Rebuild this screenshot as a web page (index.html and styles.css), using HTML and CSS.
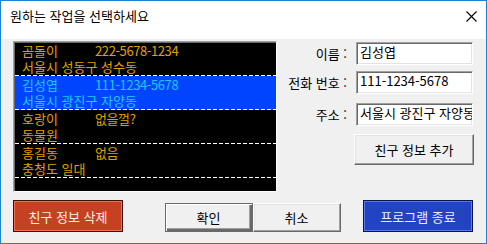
FILE: index.html
```html
<!DOCTYPE html>
<html lang="ko">
<head>
<meta charset="utf-8">
<link rel="stylesheet" href="styles.css">
</head>
<body>
<div class="window">
  <div class="titlebar">
    <span class="title">원하는 작업을 선택하세요</span>
    <svg class="close" width="11" height="11" viewBox="0 0 11 11"><path d="M0.5 0.5 L10.5 10.5 M10.5 0.5 L0.5 10.5" stroke="#000" stroke-width="1.1" fill="none"/></svg>
  </div>
  <div class="content">
    <div class="main">
      <div class="listbox">
        <div class="row">
          <div class="line"><span class="name">곰돌이</span><span class="phone">222-5678-1234</span></div>
          <div class="line">서울시 성동구 성수동</div>
        </div>
        <div class="row selected">
          <div class="line"><span class="name">김성엽</span><span class="phone">111-1234-5678</span></div>
          <div class="line">서울시 광진구 자양동</div>
        </div>
        <div class="row">
          <div class="line"><span class="name">호랑이</span><span class="phone">없을껄?</span></div>
          <div class="line">동물원</div>
        </div>
        <div class="row">
          <div class="line"><span class="name">홍길동</span><span class="phone">없음</span></div>
          <div class="line">충청도 일대</div>
        </div>
      </div>
      <div class="form">
        <div class="field f1"><span class="label">이름 :</span><div class="input">김성엽</div></div>
        <div class="field f2"><span class="label">전화 번호 :</span><div class="input">111-1234-5678</div></div>
        <div class="field f3"><span class="label">주소 :</span><div class="input">서울시 광진구 자양동</div></div>
        <button class="btn add">친구 정보 추가</button>
      </div>
    </div>
    <div class="bottom">
      <button class="btn delete">친구 정보 삭제</button>
      <div class="pair">
        <button class="btn ok">확인</button>
        <button class="btn cancel">취소</button>
      </div>
      <button class="btn exit">프로그램 종료</button>
    </div>
  </div>
</div>
</body>
</html>
```
FILE: styles.css
```css
html, body {
  margin: 0;
  padding: 0;
}
body {
  font-family: "Noto Sans CJK KR", "Noto Sans", sans-serif;
  font-size: 13px;
}
.window {
  width: 487px;
  height: 244px;
  box-sizing: border-box;
  border: 1px solid #1883d7;
  background: #f0f0f0;
  display: flex;
  flex-direction: column;
}
.titlebar {
  height: 38px;
  flex: none;
  background: #fff;
  display: flex;
  align-items: flex-start;
  justify-content: space-between;
  padding: 6px 9px 0 9px;
  box-sizing: border-box;
}
.title {
  font-size: 13px;
  line-height: 18px;
  color: #000;
}
.close {
  margin-top: 4px;
  margin-right: 0;
}
.content {
  padding: 2px 12px 0 12px;
  display: flex;
  flex-direction: column;
}
.main {
  display: flex;
}
.listbox {
  width: 264px;
  height: 151px;
  box-sizing: border-box;
  background: #000;
  border: 1px solid;
  border-color: #a0a0a0 #ffffff #ffffff #a0a0a0;
  box-shadow: inset 1px 1px 0 #696969;
  padding-left: 1px;
  display: flex;
  flex-direction: column;
  overflow: hidden;
}
.row {
  height: 34px;
  box-sizing: border-box;
  padding: 1px 0 0 7px;
  color: #e0a000;
  background-image: repeating-linear-gradient(to right, #fff 0 4px, transparent 4px 6px);
  background-size: 100% 1px;
  background-position: left bottom;
  background-repeat: no-repeat;
  flex: none;
}
.row.selected {
  background-color: #0044ff;
  color: #20c8ff;
}
.line {
  height: 16px;
  line-height: 16px;
  white-space: nowrap;
  display: flex;
}
.name {
  width: 73px;
  flex: none;
}
.phone {
  letter-spacing: -0.4px;
}
.form {
  flex: 1;
  display: flex;
  flex-direction: column;
  align-items: flex-end;
  padding-right: 1px;
}
.field {
  display: flex;
  align-items: center;
}
.f1 { margin-top: 1px; }
.f2 { margin-top: 6px; }
.f3 { margin-top: 9px; }
.label {
  color: #000;
  margin-right: 9px;
  white-space: nowrap;
}
.input {
  width: 117px;
  height: 23px;
  box-sizing: border-box;
  background: #fff;
  border: 1px solid;
  border-color: #a0a0a0 #ffffff #ffffff #a0a0a0;
  box-shadow: inset 1px 1px 0 #696969, inset -1px -1px 0 #e3e3e3;
  padding: 0 0 0 3px;
  line-height: 18px;
  color: #000;
  white-space: nowrap;
  overflow: hidden;
}
.btn {
  font-family: "Noto Sans CJK KR", "Noto Sans", sans-serif;
  font-size: 13px;
  padding: 0;
  margin: 0;
  box-sizing: border-box;
  cursor: default;
}
.add {
  width: 120px;
  height: 31px;
  margin-top: 8px;
  margin-right: -1px;
  background: #f0f0f0;
  border: 1px solid;
  border-color: #fff #696969 #696969 #fff;
  box-shadow: inset -1px -1px 0 #a0a0a0, inset 1px 1px 0 #e3e3e3;
  color: #000;
}
.bottom {
  margin-top: 8px;
  display: flex;
  align-items: flex-end;
  justify-content: space-between;
  padding-right: 1px;
}
.delete {
  width: 110px;
  height: 32px;
  background: #c44221;
  border: 1px solid #3c1008;
  box-shadow: inset 0 0 0 1px #f07050;
  color: #fff0e0;
}
.exit {
  width: 110px;
  height: 32px;
  background: #2244c4;
  border: 1px solid #0c1448;
  box-shadow: inset 0 0 0 1px #5a78f0;
  color: #e8eeff;
}
.pair {
  display: flex;
  margin-left: 19px;
}
.ok, .cancel {
  height: 29px;
  background: #f0f0f0;
  color: #000;
}
.ok {
  width: 88px;
  border: 1px solid #696969;
  box-shadow: inset 1px 1px 0 #fff, inset -2px -2px 0 #696969, inset -3px -3px 0 #a0a0a0;
}
.cancel {
  width: 88px;
  border: 1px solid;
  border-color: #fff #696969 #696969 #fff;
  box-shadow: inset -1px -1px 0 #a0a0a0, inset 1px 1px 0 #e3e3e3;
}
```
